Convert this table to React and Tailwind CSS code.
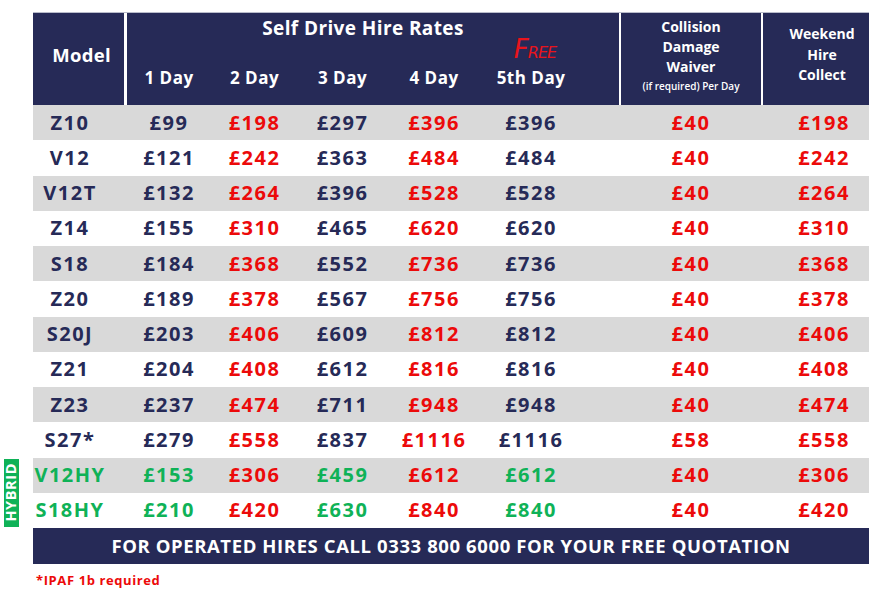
import React from "react";

const rows = [
  ["Z10", "£99", "£198", "£297", "£396", "£396", "£40", "£198"],
  ["V12", "£121", "£242", "£363", "£484", "£484", "£40", "£242"],
  ["V12T", "£132", "£264", "£396", "£528", "£528", "£40", "£264"],
  ["Z14", "£155", "£310", "£465", "£620", "£620", "£40", "£310"],
  ["S18", "£184", "£368", "£552", "£736", "£736", "£40", "£368"],
  ["Z20", "£189", "£378", "£567", "£756", "£756", "£40", "£378"],
  ["S20J", "£203", "£406", "£609", "£812", "£812", "£40", "£406"],
  ["Z21", "£204", "£408", "£612", "£816", "£816", "£40", "£408"],
  ["Z23", "£237", "£474", "£711", "£948", "£948", "£40", "£474"],
  ["S27*", "£279", "£558", "£837", "£1116", "£1116", "£58", "£558"],
];

const hybrid = [
  ["V12HY", "£153", "£306", "£459", "£612", "£612", "£40", "£306"],
  ["S18HY", "£210", "£420", "£630", "£840", "£840", "£40", "£420"],
];

function Row({ r, gray, green }) {
  const main = green ? "text-[#0fb257]" : "text-[#262a57]";
  const red = "text-[#ec0a0a]";
  return (
    <div
      className={
        "flex h-[35.25px] items-center text-[20px] font-bold tracking-[1.5px] " +
        (gray ? "bg-[#d9d9d9]" : "bg-white")
      }
    >
      <div className={"w-[94px] pr-[20px] text-center " + main}>{r[0]}</div>
      <div className={"w-[84px] text-center " + main}>{r[1]}</div>
      <div className={"w-[87px] text-center " + red}>{r[2]}</div>
      <div className={"w-[89px] text-center " + main}>{r[3]}</div>
      <div className={"w-[94px] text-center " + red}>{r[4]}</div>
      <div className={"w-[100px] text-center " + main}>{r[5]}</div>
      <div className="w-[39px]" />
      <div className={"w-[142px] text-center " + red}>{r[6]}</div>
      <div className={"w-[107px] pl-[17px] text-center " + red}>{r[7]}</div>
    </div>
  );
}

export default function App() {
  return (
    <div
      className="w-[881px] h-[595px] bg-white pt-[12px]"
      style={{ fontFamily: '"Open Sans", "Noto Sans", sans-serif' }}
    >
      {/* Header */}
      <div className="flex">
        <div className="w-[33px]" />
        <div className="flex w-[836px] h-[93px] border-t border-[#b9bccb] bg-white text-white font-bold">
          <div className="w-[91px] bg-[#262a57] flex items-center justify-center pl-[6px] pb-[8px] text-[18.5px] tracking-[0.3px]">
            Model
          </div>
          <div className="w-[3px]" />
          <div className="w-[492px] bg-[#262a57] flex flex-col">
            <div className="h-[25px] pt-[5px] pr-[20px] text-center text-[19px] leading-[20px] tracking-[0.4px]">
              Self Drive Hire Rates
            </div>
            <div className="flex h-[22px]">
              <div className="w-[84px]" />
              <div className="w-[87px]" />
              <div className="w-[89px]" />
              <div className="w-[94px]" />
              <div
                className="w-[100px] pl-[8px] text-center text-[#e8141c] italic font-extralight leading-[22px] tracking-[-1px]"
                style={{ fontFamily: '"DejaVu Sans", sans-serif' }}
              >
                <span className="text-[26px]">F</span>
                <span className="text-[16px]">REE</span>
              </div>
            </div>
            <div className="flex mt-[8px] h-[20px] text-[17px] leading-[20px] tracking-[0.5px]">
              <div className="w-[84px] text-center">1 Day</div>
              <div className="w-[87px] text-center">2 Day</div>
              <div className="w-[89px] text-center">3 Day</div>
              <div className="w-[94px] text-center">4 Day</div>
              <div className="w-[100px] text-center">5th Day</div>
            </div>
          </div>
          <div className="w-[2px]" />
          <div className="w-[140px] bg-[#262a57] flex flex-col items-center pt-[4px] text-[14px] leading-[20px]">
            <div>Collision</div>
            <div>Damage</div>
            <div>Waiver</div>
            <div className="text-[10px] leading-[18px] font-semibold">(if required) Per Day</div>
          </div>
          <div className="w-[2px]" />
          <div className="w-[106px] bg-[#262a57] flex flex-col items-center pl-[12px] pt-[11px] text-[14px] leading-[20.5px]">
            <div>Weekend</div>
            <div>Hire</div>
            <div>Collect</div>
          </div>
        </div>
      </div>

      {/* Standard rows */}
      <div className="flex">
        <div className="w-[33px]" />
        <div className="w-[836px] flex flex-col">
          {rows.map((r, i) => (
            <Row key={r[0]} r={r} gray={i % 2 === 0} />
          ))}
        </div>
      </div>

      {/* Hybrid rows */}
      <div className="flex">
        <div className="w-[33px] pl-[4px] py-[1px] flex">
          <div className="w-[14.5px] bg-[#0fb257] flex items-center justify-center">
            <span className="[writing-mode:vertical-rl] rotate-180 text-white font-bold text-[14.5px] tracking-[0.6px] leading-[14px]">
              HYBRID
            </span>
          </div>
        </div>
        <div className="w-[836px] flex flex-col">
          {hybrid.map((r, i) => (
            <Row key={r[0]} r={r} gray={i % 2 === 0} green />
          ))}
        </div>
      </div>

      {/* Footer bar */}
      <div className="flex">
        <div className="w-[33px]" />
        <div className="w-[836px] h-[36px] bg-[#262a57] flex items-center justify-center text-white font-bold text-[18.5px] tracking-[0.6px]">
          FOR OPERATED HIRES CALL 0333 800 6000 FOR YOUR FREE QUOTATION
        </div>
      </div>

      <div className="pl-[36px] pt-[7px] text-[13px] font-bold text-[#ec0a0a] tracking-[0.6px] leading-[18px]">
        *IPAF 1b required
      </div>
    </div>
  );
}
